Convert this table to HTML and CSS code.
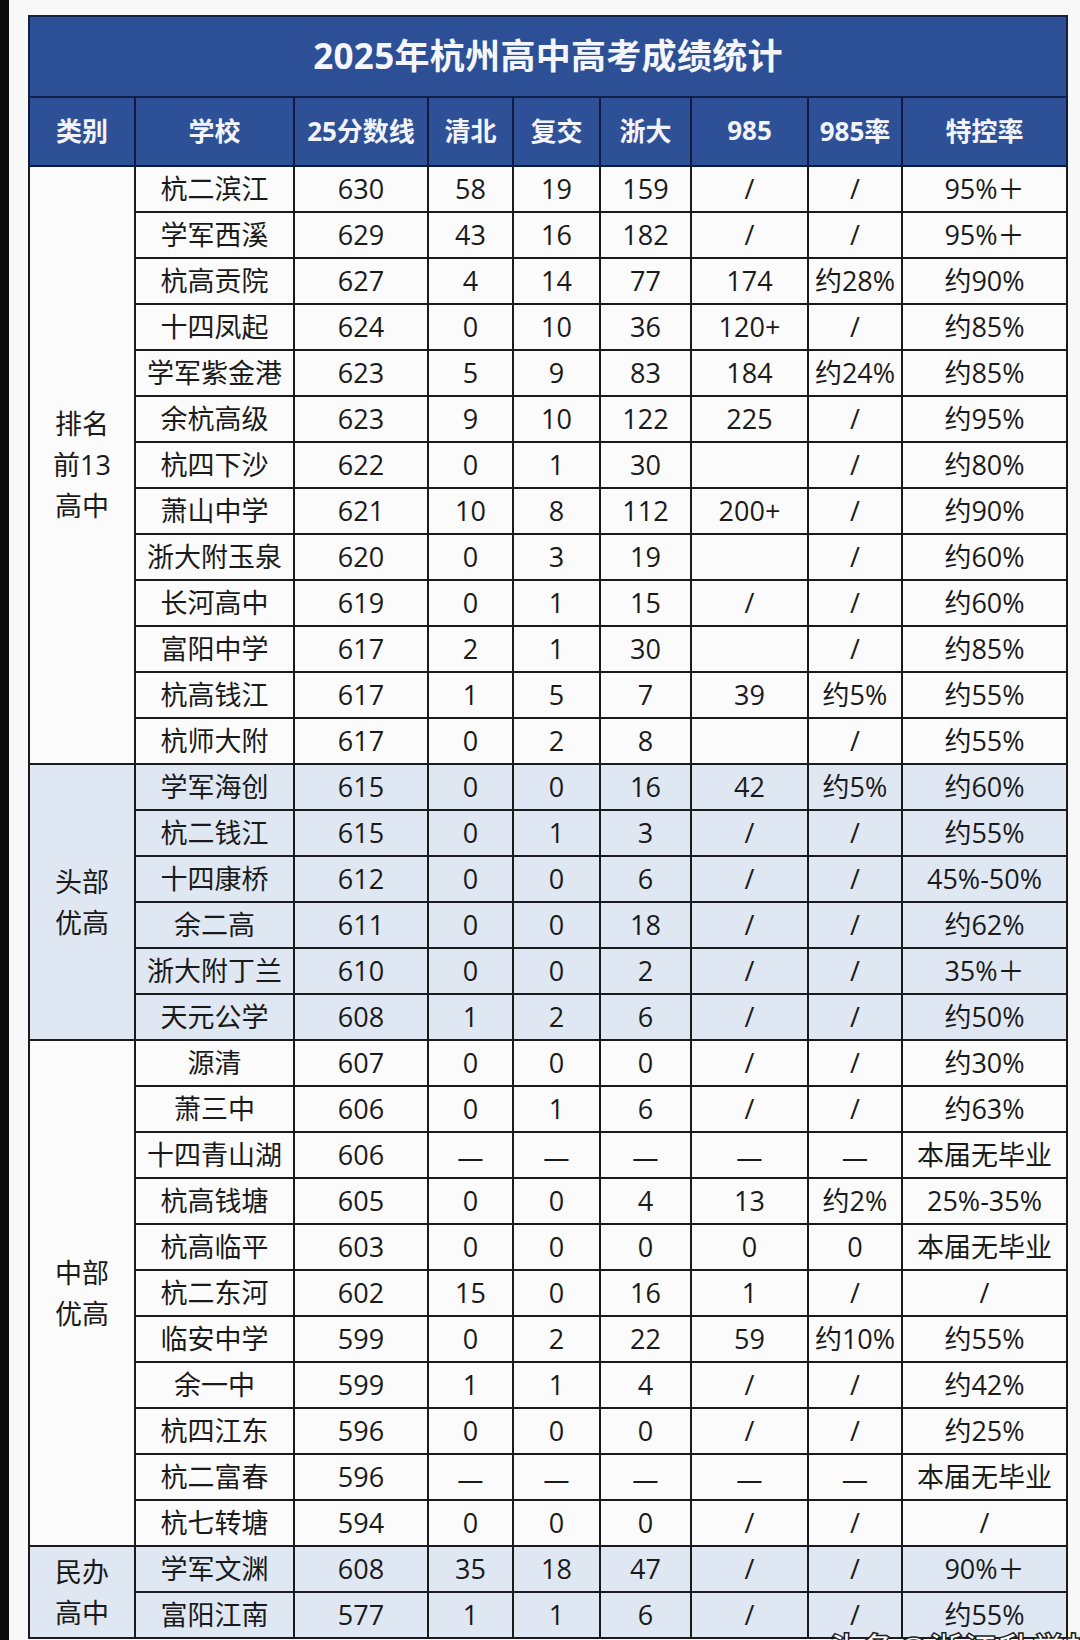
FILE: index.html
```html
<!DOCTYPE html>
<html lang="zh-CN">
<head>
<meta charset="utf-8">
<title>2025年杭州高中高考成绩统计</title>
<link rel="stylesheet" href="styles.css">
</head>
<body>
<div class="page">
  <div class="strip"></div>
  <main class="sheet">
    <table class="stats">
      <colgroup>
        <col class="c-cat"><col class="c-school"><col class="c-score"><col class="c-qb"><col class="c-fj"><col class="c-zd"><col class="c-985"><col class="c-985r"><col class="c-tk">
      </colgroup>
      <thead>
        <tr class="title-row"><th colspan="9">2025年杭州高中高考成绩统计</th></tr>
        <tr class="head-row"><th>类别</th><th>学校</th><th>25分数线</th><th>清北</th><th>复交</th><th>浙大</th><th>985</th><th>985率</th><th>特控率</th></tr>
      </thead>
      <tbody class="sec sec-white">
        <tr><td class="cat" rowspan="13">排名<br>前13<br>高中</td><td>杭二滨江</td><td>630</td><td>58</td><td>19</td><td>159</td><td>/</td><td>/</td><td>95%＋</td></tr>
        <tr><td>学军西溪</td><td>629</td><td>43</td><td>16</td><td>182</td><td>/</td><td>/</td><td>95%＋</td></tr>
        <tr><td>杭高贡院</td><td>627</td><td>4</td><td>14</td><td>77</td><td>174</td><td>约28%</td><td>约90%</td></tr>
        <tr><td>十四凤起</td><td>624</td><td>0</td><td>10</td><td>36</td><td>120+</td><td>/</td><td>约85%</td></tr>
        <tr><td>学军紫金港</td><td>623</td><td>5</td><td>9</td><td>83</td><td>184</td><td>约24%</td><td>约85%</td></tr>
        <tr><td>余杭高级</td><td>623</td><td>9</td><td>10</td><td>122</td><td>225</td><td>/</td><td>约95%</td></tr>
        <tr><td>杭四下沙</td><td>622</td><td>0</td><td>1</td><td>30</td><td></td><td>/</td><td>约80%</td></tr>
        <tr><td>萧山中学</td><td>621</td><td>10</td><td>8</td><td>112</td><td>200+</td><td>/</td><td>约90%</td></tr>
        <tr><td>浙大附玉泉</td><td>620</td><td>0</td><td>3</td><td>19</td><td></td><td>/</td><td>约60%</td></tr>
        <tr><td>长河高中</td><td>619</td><td>0</td><td>1</td><td>15</td><td>/</td><td>/</td><td>约60%</td></tr>
        <tr><td>富阳中学</td><td>617</td><td>2</td><td>1</td><td>30</td><td></td><td>/</td><td>约85%</td></tr>
        <tr><td>杭高钱江</td><td>617</td><td>1</td><td>5</td><td>7</td><td>39</td><td>约5%</td><td>约55%</td></tr>
        <tr><td>杭师大附</td><td>617</td><td>0</td><td>2</td><td>8</td><td></td><td>/</td><td>约55%</td></tr>
      </tbody>
      <tbody class="sec sec-blue">
        <tr><td class="cat" rowspan="6">头部<br>优高</td><td>学军海创</td><td>615</td><td>0</td><td>0</td><td>16</td><td>42</td><td>约5%</td><td>约60%</td></tr>
        <tr><td>杭二钱江</td><td>615</td><td>0</td><td>1</td><td>3</td><td>/</td><td>/</td><td>约55%</td></tr>
        <tr><td>十四康桥</td><td>612</td><td>0</td><td>0</td><td>6</td><td>/</td><td>/</td><td>45%-50%</td></tr>
        <tr><td>余二高</td><td>611</td><td>0</td><td>0</td><td>18</td><td>/</td><td>/</td><td>约62%</td></tr>
        <tr><td>浙大附丁兰</td><td>610</td><td>0</td><td>0</td><td>2</td><td>/</td><td>/</td><td>35%＋</td></tr>
        <tr><td>天元公学</td><td>608</td><td>1</td><td>2</td><td>6</td><td>/</td><td>/</td><td>约50%</td></tr>
      </tbody>
      <tbody class="sec sec-white">
        <tr><td class="cat" rowspan="11">中部<br>优高</td><td>源清</td><td>607</td><td>0</td><td>0</td><td>0</td><td>/</td><td>/</td><td>约30%</td></tr>
        <tr><td>萧三中</td><td>606</td><td>0</td><td>1</td><td>6</td><td>/</td><td>/</td><td>约63%</td></tr>
        <tr><td>十四青山湖</td><td>606</td><td class="dash">—</td><td class="dash">—</td><td class="dash">—</td><td class="dash">—</td><td class="dash">—</td><td>本届无毕业</td></tr>
        <tr><td>杭高钱塘</td><td>605</td><td>0</td><td>0</td><td>4</td><td>13</td><td>约2%</td><td>25%-35%</td></tr>
        <tr><td>杭高临平</td><td>603</td><td>0</td><td>0</td><td>0</td><td>0</td><td>0</td><td>本届无毕业</td></tr>
        <tr><td>杭二东河</td><td>602</td><td>15</td><td>0</td><td>16</td><td>1</td><td>/</td><td>/</td></tr>
        <tr><td>临安中学</td><td>599</td><td>0</td><td>2</td><td>22</td><td>59</td><td>约10%</td><td>约55%</td></tr>
        <tr><td>余一中</td><td>599</td><td>1</td><td>1</td><td>4</td><td>/</td><td>/</td><td>约42%</td></tr>
        <tr><td>杭四江东</td><td>596</td><td>0</td><td>0</td><td>0</td><td>/</td><td>/</td><td>约25%</td></tr>
        <tr><td>杭二富春</td><td>596</td><td class="dash">—</td><td class="dash">—</td><td class="dash">—</td><td class="dash">—</td><td class="dash">—</td><td>本届无毕业</td></tr>
        <tr><td>杭七转塘</td><td>594</td><td>0</td><td>0</td><td>0</td><td>/</td><td>/</td><td>/</td></tr>
      </tbody>
      <tbody class="sec sec-blue">
        <tr><td class="cat" rowspan="2">民办<br>高中</td><td>学军文渊</td><td>608</td><td>35</td><td>18</td><td>47</td><td>/</td><td>/</td><td>90%＋</td></tr>
        <tr><td>富阳江南</td><td>577</td><td>1</td><td>1</td><td>6</td><td>/</td><td>/</td><td>约55%</td></tr>
      </tbody>
    </table>
    <div class="watermark">头条@浙江升学规划</div>
  </main>
</div>
</body>
</html>
```

FILE: styles.css
```css
html, body {
  margin: 0;
  padding: 0;
}

body {
  width: 1080px;
  height: 1640px;
  overflow: hidden;
  background: #f7f7f7;
  font-family: "Open Sans", "Noto Sans CJK SC", sans-serif;
  color: #1a1a1a;
}

.page {
  display: flex;
  height: 1640px;
}

.strip {
  width: 9px;
  flex: none;
  background: #0c0c0c;
}

.sheet {
  position: relative;
  flex: 1;
  padding: 15px 0 0 19px;
  background: #f8f8f8;
}

.stats {
  width: 1038px;
  table-layout: fixed;
  border-collapse: collapse;
  border: 2px solid #141a2c;
}

.c-cat { width: 106px; }
.c-school { width: 159px; }
.c-score { width: 134px; }
.c-qb { width: 85px; }
.c-fj { width: 87px; }
.c-zd { width: 91px; }
.c-985 { width: 117px; }
.c-985r { width: 94px; }
.c-tk { width: 165px; }

.title-row th {
  height: 73px;
  padding: 0 0 6px;
  background: #2d4f95;
  color: #f4f6fb;
  font-size: 35px;
  font-weight: 700;
  letter-spacing: 0.3px;
  text-align: center;
  border: 2px solid #13214a;
}

.head-row th {
  height: 64px;
  padding: 0 0 3px;
  background: #2e5097;
  color: #f2f4fa;
  font-size: 26px;
  font-weight: 700;
  text-align: center;
  border: 2px solid #0f1b40;
}

.stats td {
  height: 43px;
  padding: 0 0 1px;
  font-size: 27px;
  line-height: 1;
  text-align: center;
  vertical-align: middle;
  border: 2px solid #1b1b1b;
  white-space: nowrap;
}

.sec-white td {
  background: #fbfbfb;
}

.sec-blue td {
  background: #dfe7f2;
}

.stats td.cat {
  line-height: 41px;
  font-size: 27px;
}

.stats td.dash {
  font-family: "Noto Sans CJK SC", sans-serif;
  font-size: 30px;
  transform: none;
}

.watermark {
  position: absolute;
  left: 818px;
  top: 1631px;
  font-family: "Noto Sans CJK SC", sans-serif;
  font-size: 34px;
  line-height: 1;
  font-weight: 700;
  color: #ffffff;
  -webkit-text-stroke: 1.5px #1e1e1e;
  white-space: nowrap;
}
```
